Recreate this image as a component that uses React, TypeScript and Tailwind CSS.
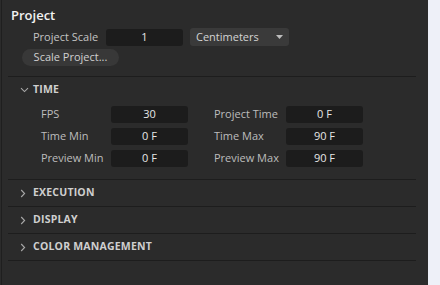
import React from 'react';

const font = { fontFamily: '"Open Sans", "Noto Sans", sans-serif' };

function ValueBox({ value, width = 'w-[77px]' }: { value: string; width?: string }) {
  return (
    <div className={`${width} h-[17px] rounded-[3px] bg-[#1c1c1c] flex items-center justify-center text-[11px] text-[#e6e6e6]`}>
      {value}
    </div>
  );
}

function Chevron({ open }: { open?: boolean }) {
  return open ? (
    <svg width="9" height="6" viewBox="0 0 9 6" className="text-[#a8a8a8]">
      <path d="M1 1.2 L4.5 4.6 L8 1.2" fill="none" stroke="currentColor" strokeWidth="1.1" />
    </svg>
  ) : (
    <svg width="6" height="9" viewBox="0 0 6 9" className="text-[#a8a8a8]">
      <path d="M1.2 1 L4.6 4.5 L1.2 8" fill="none" stroke="currentColor" strokeWidth="1.1" />
    </svg>
  );
}

function Divider() {
  return <div className="ml-[6px] w-[408px] h-px bg-[#1d1d1d]" />;
}

function SectionHeader({ title, open }: { title: string; open?: boolean }) {
  return (
    <div className="h-[26px] flex items-center pl-[18px]">
      <div className="w-[13px] flex items-center justify-start">
        <Chevron open={open} />
      </div>
      <span className="text-[10.5px] font-bold tracking-[0.2px] text-[#cfcfcf]">{title}</span>
    </div>
  );
}

export default function App() {
  const rows = [
    ['FPS', '30', 'Project Time', '0 F'],
    ['Time Min', '0 F', 'Time Max', '90 F'],
    ['Preview Min', '0 F', 'Preview Max', '90 F'],
  ];

  return (
    <div className="w-[440px] h-[285px] flex bg-[#eef0f8]" style={font}>
      <div className="w-[428px] h-full bg-[#2b2b2b] pl-[2px]">
        <div className="h-full border-l border-[#1f1f1f] -ml-px">
          <div className="pt-[6px] pl-[9px] text-[13px] font-semibold text-[#f2f2f2] leading-[18px]">Project</div>

          <div className="mt-[4px] flex items-center h-[18px]">
            <span className="ml-[31px] w-[73px] text-[11px] text-[#c4c4c4]">Project Scale</span>
            <ValueBox value="1" />
            <div className="ml-[7px] w-[99px] h-[18px] rounded-[3px] bg-[#3a3a3a] flex items-center pl-[6px] pr-[6px] text-[11px] text-[#d4d4d4]">
              <span className="flex-1">Centimeters</span>
              <svg width="7" height="4" viewBox="0 0 7 4">
                <path d="M0 0 H7 L3.5 4 Z" fill="#bdbdbd" />
              </svg>
            </div>
          </div>

          <div className="mt-[3px] ml-[20px] w-[97px] h-[17px] rounded-full bg-[#383838] flex items-center justify-center text-[11px] text-[#d0d0d0]">
            Scale Project...
          </div>

          <div className="h-[10px]" />
          <Divider />

          <SectionHeader title="TIME" open />
          <div className="mt-[3px] flex flex-col gap-[5px]">
            {rows.map(([l1, v1, l2, v2]) => (
              <div key={l1} className="flex items-center h-[17px]">
                <span className="ml-[39px] w-[70px] text-[11px] text-[#bdbdbd]">{l1}</span>
                <ValueBox value={v1} />
                <span className="ml-[26px] w-[72px] text-[11px] text-[#bdbdbd]">{l2}</span>
                <ValueBox value={v2} />
              </div>
            ))}
          </div>
          <div className="h-[12px]" />
          <Divider />

          <SectionHeader title="EXECUTION" />
          <Divider />
          <SectionHeader title="DISPLAY" />
          <Divider />
          <SectionHeader title="COLOR MANAGEMENT" />
          <Divider />
        </div>
      </div>
    </div>
  );
}
